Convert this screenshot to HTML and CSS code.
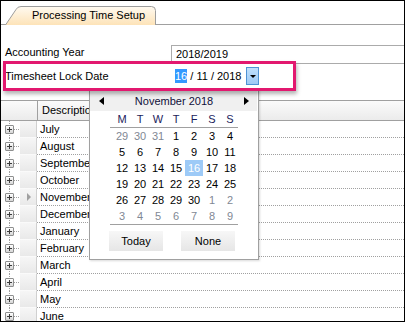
FILE: index.html
```html
<!DOCTYPE html>
<html>
<head>
<meta charset="utf-8">
<link rel="stylesheet" href="styles.css">
</head>
<body>
<div class="page">
  <div class="tabstrip">
    <div class="tab">
      <svg class="tab-bg" width="151" height="19" viewBox="0 0 151 19">
        <defs>
          <linearGradient id="tg" x1="0" y1="0" x2="0" y2="1">
            <stop offset="0" stop-color="#fffaf1"/>
            <stop offset="1" stop-color="#fde3b8"/>
          </linearGradient>
        </defs>
        <path d="M0.5 19 L11 3.5 Q12.5 0.5 16 0.5 L146.5 0.5 Q150.5 0.5 150.5 4.5 L150.5 19" fill="url(#tg)" stroke="#9c9c9c"/>
      </svg>
      <span class="tab-label">Processing Time Setup</span>
    </div>
  </div>

  <div class="form">
    <div class="form-row row-year">
      <span class="label label-year">Accounting Year</span>
      <div class="textbox">2018/2019</div>
    </div>
    <div class="form-row row-date">
      <span class="label">Timesheet Lock Date</span>
      <div class="datebox">
        <span class="sel">16</span><span class="date-rest">&nbsp;/ 11 / 2018</span>
        <span class="dd-btn"><span class="dd-arrow"></span></span>
      </div>
    </div>
  </div>

  <div class="grid">
    <div class="grid-head">
      <div class="corner"></div>
      <div class="head-desc">Description</div>
    </div>
    <div class="row"><div class="tree"><span class="plus"></span></div><div class="selector"></div><div class="desc">July</div></div>
    <div class="row"><div class="tree"><span class="plus"></span></div><div class="selector"></div><div class="desc">August</div></div>
    <div class="row"><div class="tree"><span class="plus"></span></div><div class="selector"></div><div class="desc">September</div></div>
    <div class="row"><div class="tree"><span class="plus"></span></div><div class="selector"></div><div class="desc">October</div></div>
    <div class="row"><div class="tree"><span class="plus"></span></div><div class="selector"><span class="current"></span></div><div class="desc">November</div></div>
    <div class="row"><div class="tree"><span class="plus"></span></div><div class="selector"></div><div class="desc">December</div></div>
    <div class="row"><div class="tree"><span class="plus"></span></div><div class="selector"></div><div class="desc">January</div></div>
    <div class="row"><div class="tree"><span class="plus"></span></div><div class="selector"></div><div class="desc">February</div></div>
    <div class="row"><div class="tree"><span class="plus"></span></div><div class="selector"></div><div class="desc">March</div></div>
    <div class="row"><div class="tree"><span class="plus"></span></div><div class="selector"></div><div class="desc">April</div></div>
    <div class="row"><div class="tree"><span class="plus"></span></div><div class="selector"></div><div class="desc">May</div></div>
    <div class="row"><div class="tree"><span class="plus"></span></div><div class="selector"></div><div class="desc">June</div></div>
  </div>

  <div class="calendar">
    <div class="cal-head">
      <span class="arrow-left"></span>
      <span class="cal-title">November 2018</span>
      <span class="arrow-right"></span>
    </div>
    <div class="cal-dow">
      <span>M</span><span>T</span><span>W</span><span>T</span><span>F</span><span>S</span><span>S</span>
    </div>
    <div class="cal-line"></div>
    <div class="cal-days">
      <span class="other">29</span><span class="other">30</span><span class="other">31</span><span>1</span><span>2</span><span>3</span><span>4</span>
      <span>5</span><span>6</span><span>7</span><span>8</span><span>9</span><span>10</span><span>11</span>
      <span>12</span><span>13</span><span>14</span><span>15</span><span class="picked">16</span><span>17</span><span>18</span>
      <span>19</span><span>20</span><span>21</span><span>22</span><span>23</span><span>24</span><span>25</span>
      <span>26</span><span>27</span><span>28</span><span>29</span><span>30</span><span class="other">1</span><span class="other">2</span>
      <span class="other">3</span><span class="other">4</span><span class="other">5</span><span class="other">6</span><span class="other">7</span><span class="other">8</span><span class="other">9</span>
    </div>
    <div class="cal-line"></div>
    <div class="cal-buttons">
      <span class="cal-btn">Today</span>
      <span class="cal-btn">None</span>
    </div>
  </div>

  <div class="highlight"></div>
</div>
</body>
</html>
```

FILE: styles.css
```css
html, body {
  margin: 0;
  padding: 0;
  background: #fff;
}

.page {
  position: relative;
  width: 405px;
  height: 322px;
  box-sizing: border-box;
  border: 1px solid #000;
  overflow: hidden;
  font-family: "Liberation Sans", Arial, sans-serif;
  font-size: 11px;
  color: #000;
  background: #fff;
}

/* Tab strip */
.tabstrip {
  height: 23px;
  border-bottom: 1px solid #a0a0a0;
  display: flex;
  align-items: flex-end;
  padding-left: 4px;
}

.tab {
  position: relative;
  width: 151px;
  height: 19px;
  margin-bottom: -1px;
  box-sizing: border-box;
  padding: 3px 0 0 27px;
  line-height: 13px;
}

.tab-bg {
  position: absolute;
  left: 0;
  top: 0;
}

.tab-label {
  position: relative;
  white-space: nowrap;
}

/* Form */
.form {
  padding: 20px 0 0 4px;
}

.form-row {
  display: grid;
  grid-template-columns: 166px 1fr;
}

.row-year {
  height: 19px;
}

.label-year {
  align-self: start;
  line-height: 15px;
}

.row-date {
  height: 18px;
  margin-top: 3px;
  align-items: center;
}

.label {
  white-space: nowrap;
}

.textbox {
  height: 19px;
  box-sizing: border-box;
  border: 1px solid #ababab;
  border-right: none;
  padding-left: 4px;
  line-height: 17px;
}

.datebox {
  width: 88px;
  height: 18px;
  display: flex;
  align-items: center;
  padding-left: 4px;
  box-sizing: border-box;
  white-space: nowrap;
}

.sel {
  background: #3399ff;
  color: #fff;
  height: 14px;
  line-height: 14px;
}

.dd-btn {
  margin-left: auto;
  width: 13px;
  height: 18px;
  box-sizing: border-box;
  border: 1px solid #4f93d4;
  background: linear-gradient(#bfe0fc, #9ecaf5);
  display: flex;
  align-items: center;
  justify-content: center;
}

.dd-arrow {
  width: 0;
  height: 0;
  border-top: 3px solid #000;
  border-left: 3px solid transparent;
  border-right: 3px solid transparent;
}

/* Grid */
.grid {
  margin-top: 15px;
}

.grid-head {
  display: flex;
  height: 21px;
  box-sizing: border-box;
  border-top: 1px solid #a0a0a0;
  border-bottom: 1px solid #a0a0a0;
  background: linear-gradient(#fbfbfb, #ebebeb);
}

.corner {
  width: 36px;
  border-right: 1px solid #a0a0a0;
}

.head-desc {
  padding-left: 4px;
  line-height: 19px;
}

.row {
  display: flex;
  height: 17px;
}

.tree {
  width: 19px;
  height: 17px;
  display: flex;
  align-items: center;
  background:
    repeating-linear-gradient(to bottom, #a0a0a0 0 1px, transparent 1px 2px) 8px 0 / 1px 100% no-repeat,
    repeating-linear-gradient(to right, #a0a0a0 0 1px, transparent 1px 2px) 13px 8px / 6px 1px no-repeat;
}

.plus {
  width: 9px;
  height: 9px;
  margin-left: 4px;
  margin-top: -1px;
  box-sizing: border-box;
  border: 1px solid #8e8f8f;
  border-radius: 1px;
  background:
    linear-gradient(#3c3c3c, #3c3c3c) 50% 50% / 5px 1px no-repeat,
    linear-gradient(#3c3c3c, #3c3c3c) 50% 50% / 1px 5px no-repeat,
    linear-gradient(#ffffff, #d6d6d6);
}

.selector {
  width: 17px;
  height: 17px;
  box-sizing: border-box;
  border-right: 1px solid #d0d0d0;
  border-bottom: 1px solid #fafafa;
  background: linear-gradient(#f6f6f6, #e9e9e9);
  display: flex;
  align-items: center;
}

.current {
  width: 0;
  height: 0;
  margin-left: 7px;
  border-left: 4px solid #a0a0a0;
  border-top: 4px solid transparent;
  border-bottom: 4px solid transparent;
}

.desc {
  flex: 1;
  height: 17px;
  box-sizing: border-box;
  border-bottom: 1px dotted #a0a0a0;
  padding-left: 3px;
  line-height: 16px;
  white-space: nowrap;
}

/* Calendar popup */
.calendar {
  position: absolute;
  left: 88px;
  top: 88px;
  width: 170px;
  height: 171px;
  box-sizing: border-box;
  border: 1px solid #a0a0a0;
  background: #fff;
  box-shadow: 1px 1px 2px rgba(0, 0, 0, 0.15);
}

.cal-head {
  margin: 1px 1px 0 0;
  height: 20px;
  background: #f0f0f0;
  display: flex;
  align-items: center;
  justify-content: space-between;
  padding: 0 8px 0 9px;
}

.arrow-left {
  width: 0;
  height: 0;
  border-right: 5px solid #000;
  border-top: 4.5px solid transparent;
  border-bottom: 4.5px solid transparent;
}

.arrow-right {
  width: 0;
  height: 0;
  border-left: 5px solid #000;
  border-top: 4.5px solid transparent;
  border-bottom: 4.5px solid transparent;
}

.cal-title {
  color: #10103a;
}

.cal-dow,
.cal-days {
  display: grid;
  grid-template-columns: repeat(7, 18px);
  margin-left: 23px;
  text-align: center;
}

.cal-dow {
  height: 16px;
  line-height: 16px;
  color: #1c1c5c;
}

.cal-days {
  grid-auto-rows: 16px;
  line-height: 16px;
}

.cal-days .other {
  color: #7f8894;
}

.cal-days .picked {
  background: #9dcaf7;
  color: #fff;
}

.cal-line {
  margin-left: 20px;
  width: 128px;
  height: 1px;
  background: #a0a0a0;
}

.cal-buttons {
  display: flex;
  gap: 18px;
  margin-top: 6px;
  padding-left: 19px;
}

.cal-btn {
  width: 54px;
  height: 20px;
  line-height: 20px;
  text-align: center;
  background: linear-gradient(#f7f7f7, #e6e6e6);
}

/* Annotation highlight */
.highlight {
  position: absolute;
  left: 2px;
  top: 60px;
  width: 293px;
  height: 30px;
  box-sizing: border-box;
  border: 3px solid #e2186f;
  box-shadow: 1px 3px 4px rgba(0, 0, 0, 0.3);
}
```
